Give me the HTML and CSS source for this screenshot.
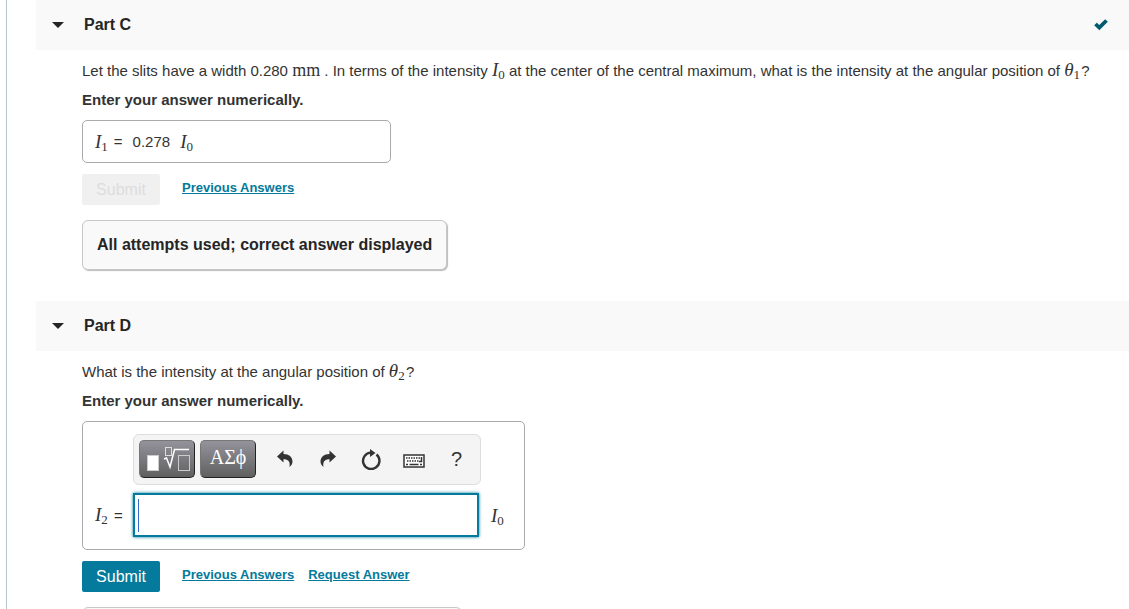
FILE: index.html
```html
<!DOCTYPE html>
<html lang="en">
  <head>
    <meta charset="UTF-8" />
    <meta name="viewport" content="width=device-width, initial-scale=1.0" />
    <title>Problem</title>
    <link rel="stylesheet" href="styles.css">
  </head>
  <body>
    <main class="problem">
      <section class="part">
        <header class="part-header">
          <button class="toggle" aria-label="Collapse Part C"></button>
          <h2>Part C</h2>
          <svg class="check" width="14" height="12" viewBox="0 0 14 12">
            <path d="M1.500 5 L5.300 8.700 L12.500 1.500" fill="none" stroke="#005a70" stroke-width="3.800" />
          </svg>
        </header>
        <div class="part-body">
          <p class="question">Let the slits have a width 0.280 <span class="math unit">mm</span> . In terms of the intensity <span class="math"><i>I</i><sub>0</sub></span> at the center of the central maximum, what is the intensity at the angular position of <span class="math"><i>θ</i><sub>1</sub></span>&#8202;?</p>
          <p class="instructions">Enter your answer numerically.</p>
          <div class="answer given">
            <span class="math"><i>I</i><sub>1</sub></span>
            <span class="equals">=</span>
            <span class="value">0.278</span>
            <span class="math"><i>I</i><sub>0</sub></span>
          </div>
          <div class="actions">
            <button class="submit" disabled>Submit</button>
            <a href="#">Previous Answers</a>
          </div>
          <div class="feedback">All attempts used; correct answer displayed</div>
        </div>
      </section>

      <section class="part">
        <header class="part-header">
          <button class="toggle" aria-label="Collapse Part D"></button>
          <h2>Part D</h2>
        </header>
        <div class="part-body">
          <p class="question">What is the intensity at the angular position of <span class="math"><i>θ</i><sub>2</sub></span>&#8202;?</p>
          <p class="instructions">Enter your answer numerically.</p>
          <div class="answer entry">
            <div class="toolbar">
              <button class="palette" aria-label="Templates">
                <svg width="46" height="28" viewBox="0 0 46 28">
                  <rect x="3.500" y="10.500" width="11" height="15" fill="#fff" stroke="#ccc" />
                  <rect x="21.500" y="2.500" width="6" height="8" fill="none" stroke="#ddd" />
                  <path d="M20 14 L22.500 13 L26 22 L30.500 4.500 H45" fill="none" stroke="#fff" stroke-width="1.500" />
                  <rect x="34.500" y="10.500" width="11" height="15" fill="none" stroke="#ccc" />
                </svg>
              </button>
              <button class="palette greek">ΑΣϕ</button>
              <button class="tool" aria-label="Undo">
                <svg width="16" height="18" viewBox="0 0 16 18">
                  <path d="M0 6.500 L6.500 0.500 V4 C12 4 15.500 7 15.500 11.500 C15.500 13.500 14.500 15.500 12.500 17 C13.500 11.500 11 9.300 6.500 9.300 V12.500 Z" fill="#333" />
                </svg>
              </button>
              <button class="tool" aria-label="Redo">
                <svg width="16" height="18" viewBox="0 0 16 18">
                  <path d="M16 6.500 L9.500 0.500 V4 C4 4 0.500 7 0.500 11.500 C0.500 13.500 1.500 15.500 3.500 17 C2.500 11.500 5 9.300 9.500 9.300 V12.500 Z" fill="#333" />
                </svg>
              </button>
              <button class="tool" aria-label="Reset">
                <svg width="20" height="21" viewBox="0 0 20 21">
                  <path d="M15.500 5.500 A8.200 8.200 0 1 1 10 3.600" fill="none" stroke="#333" stroke-width="2.400" />
                  <path d="M9 0 L14.500 4 L9 8 Z" fill="#333" />
                </svg>
              </button>
              <button class="tool" aria-label="Keyboard shortcuts">
                <svg class="keyboard" width="22" height="14" viewBox="0 0 22 14">
                  <rect x="1" y="1" width="20" height="12" fill="#fff" stroke="#333" stroke-width="1.500" />
                  <path d="M3 4 H17 M4 7 H16" stroke="#333" stroke-width="1.500" stroke-dasharray="1.500 1" />
                  <path d="M3 10.500 H5 M6.500 10.500 H15.500 M17 10.500 H19 M18.500 3 V7.500 H16" fill="none" stroke="#333" stroke-width="1.500" />
                </svg>
              </button>
              <button class="tool help" aria-label="Help">?</button>
            </div>
            <label class="lhs" for="answer-d"><span class="math"><i>I</i><sub>2</sub></span> <span class="equals">=</span></label>
            <input id="answer-d" class="field" type="text" autocomplete="off">
            <span class="math rhs"><i>I</i><sub>0</sub></span>
          </div>
          <div class="actions">
            <button class="submit">Submit</button>
            <a href="#">Previous Answers</a>
            <a href="#">Request Answer</a>
          </div>
          <div class="feedback next"></div>
        </div>
      </section>
    </main>
  </body>
</html>
```
FILE: styles.css
```css
* {
  margin: 0;
  padding: 0;
  box-sizing: border-box;
}

body {
  height: 100vh;
  overflow: hidden;
  background-color: #fff;
  color: #333;
  font-family: "Liberation Sans", Arial, sans-serif;
  font-size: 15px;
  line-height: 20px;
}

button,
input {
  font: inherit;
  border: none;
}

button {
  cursor: pointer;
}

.problem {
  min-height: 100vh;
  margin-left: 6px;
  padding-left: 29px;
  border-left: 1px solid #b5c7d5;
}

.part-header {
  display: flex;
  align-items: center;
  height: 50px;
  padding: 0 21px 0 16px;
  background-color: #f9f9f9;
}

.toggle {
  width: 12px;
  height: 6px;
  margin-right: 20px;
  background-color: #252525;
  clip-path: polygon(0 0, 100% 0, 50% 100%);
}

h2 {
  font-size: 16px;
  color: #252525;
}

.check {
  margin-left: auto;
}

.part-body {
  padding: 10px 0 31px 46px;
}

.question {
  margin-bottom: 9px;
}

.instructions {
  margin-bottom: 10px;
  font-weight: bold;
}

.math {
  font-family: "Liberation Serif", "Times New Roman", serif;
  font-size: 19px;
  line-height: 1;
}

.math sub {
  font-size: 13px;
  line-height: 0;
  vertical-align: -3px;
}

.unit {
  font-size: 18px;
}

.answer {
  border: 1px solid #aaa;
  border-radius: 5px;
}

.given {
  display: flex;
  align-items: center;
  width: 309px;
  height: 43px;
  padding: 0 12px;
}

.equals {
  margin: 0 10px 0 6px;
}

.value {
  margin-right: 10px;
}

.actions {
  display: flex;
  align-items: center;
  margin-top: 11px;
}

.submit {
  width: 78px;
  height: 31px;
  margin-right: 22px;
  border-radius: 2px;
  background-color: #047a9c;
  color: #fff;
  font-size: 16px;
}

.submit:disabled {
  background-color: #f0f0f0;
  color: #ddd;
}

.actions a {
  margin: 0 14px 3px 0;
  color: #047a9c;
  font-size: 13px;
  font-weight: bold;
}

.feedback {
  width: fit-content;
  margin-top: 15px;
  padding: 14px;
  border: 1px solid #c7c7c7;
  border-radius: 6px;
  background-color: #f9f9f9;
  box-shadow: 1px 1px 1px #bbb;
  color: #252525;
  font-size: 16px;
  font-weight: bold;
}

.next {
  width: 380px;
  min-height: 50px;
}

.entry {
  display: grid;
  grid-template-columns: 38px 348px auto;
  row-gap: 8px;
  align-items: center;
  width: 443px;
  padding: 12px;
}

.toolbar {
  grid-column: 2;
  display: flex;
  align-items: flex-start;
  height: 51px;
  padding: 5px;
  border: 1px solid #ddd;
  border-radius: 6px;
  background-color: #f4f4f4;
}

.palette {
  display: flex;
  flex-shrink: 0;
  align-items: center;
  justify-content: center;
  width: 56px;
  height: 38px;
  margin-right: 5px;
  border: 1px solid #222;
  border-top-color: #777;
  border-left-color: #777;
  border-radius: 5px;
  background-image: linear-gradient(#94939c, #606060);
  color: #fff;
}

.greek {
  margin-right: 7px;
  padding-bottom: 4px;
  font-family: "Liberation Serif", serif;
  font-size: 20px;
}

.tool {
  display: flex;
  flex-shrink: 0;
  align-items: center;
  justify-content: center;
  width: 43px;
  height: 38px;
  background: none;
  color: #333;
}

.help {
  font-size: 20px;
}

.keyboard {
  margin-top: 4px;
}

.lhs {
  grid-column: 1;
  white-space: nowrap;
}

.lhs .equals {
  margin: 0 0 0 2px;
}

/* focused answer box with the text cursor at its left edge */
.field {
  width: 346px;
  height: 44px;
  padding: 0 6px;
  border: 2px solid #047a9c;
  outline: none;
  background: linear-gradient(#36c, #36c) 3px center / 1px 33px no-repeat #fff;
  box-shadow: 0 0 3px #047a9c;
}

.rhs {
  margin-left: 10px;
}
```
